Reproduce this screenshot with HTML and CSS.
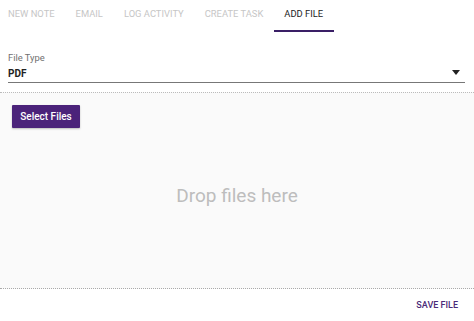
FILE: index.html
```html
<!DOCTYPE html>
<html>
<head>
<meta charset="utf-8">
<link rel="stylesheet" href="styles.css">
</head>
<body>
<div class="page">
  <nav class="tabs">
    <div class="tab">New Note</div>
    <div class="tab">Email</div>
    <div class="tab">Log Activity</div>
    <div class="tab">Create Task</div>
    <div class="tab active">Add File</div>
  </nav>
  <div class="field">
    <div class="label">File Type</div>
    <div class="select">
      <span class="value">PDF</span>
      <svg class="caret" width="8" height="5" viewBox="0 0 8 5"><path d="M0 0H8L4 5Z" fill="#222"/></svg>
    </div>
  </div>
  <div class="dropzone">
    <div class="dz-top"><button class="btn">Select Files</button></div>
    <div class="dz-text">Drop files here</div>
  </div>
  <div class="footer">
    <button class="save">Save File</button>
  </div>
</div>
</body>
</html>
```
FILE: styles.css
```css
html, body { margin: 0; padding: 0; background: #fff; }
body { font-family: Roboto, "Liberation Sans", sans-serif; width: 474px; height: 321px; overflow: hidden; }
.page { display: flex; flex-direction: column; height: 321px; }
.tabs { display: flex; height: 32px; margin-left: -2.5px; }
.tab { padding: 0 10.5px; font-size: 9.4px; text-transform: uppercase; color: #c6c6c6; line-height: 28px; box-sizing: border-box; height: 32px; border-bottom: 2px solid transparent; }
.tab.active { color: #222; border-bottom-color: #3a1f66; }
.field { padding: 20px 9px 0 8px; height: 60px; box-sizing: border-box; }
.label { font-size: 9.4px; color: #707070; line-height: 12px; }
.select { display: flex; justify-content: space-between; align-items: center; border-bottom: 1.5px solid #777; height: 19px; box-sizing: border-box; padding-right: 5px; }
.value { font-size: 10px; font-weight: 700; color: #222; }
.caret { margin-top: -1px; }
.dropzone { flex: 1; background: #fafafa; border-top: 1px dotted #bbb; border-bottom: 1px dotted #aaa; display: flex; flex-direction: column; }
.dz-top { padding: 12px 12px 0; }
.btn { background: #4b237a; color: #fff; border: none; border-radius: 1px; font-family: inherit; font-size: 10px; font-weight: 500; width: 68px; height: 23px; padding: 0; box-shadow: 0 1px 2px rgba(0,0,0,0.25); }
.dz-text { flex: 1; display: flex; align-items: center; justify-content: center; font-size: 19px; color: #bdbdbd; padding-bottom: 26px; }
.footer { height: 32px; display: flex; justify-content: flex-end; align-items: center; padding-right: 16px; }
.save { background: none; border: none; font-family: inherit; font-size: 9px; font-weight: 500; color: #4b2a78; text-transform: uppercase; padding: 0; }
```
